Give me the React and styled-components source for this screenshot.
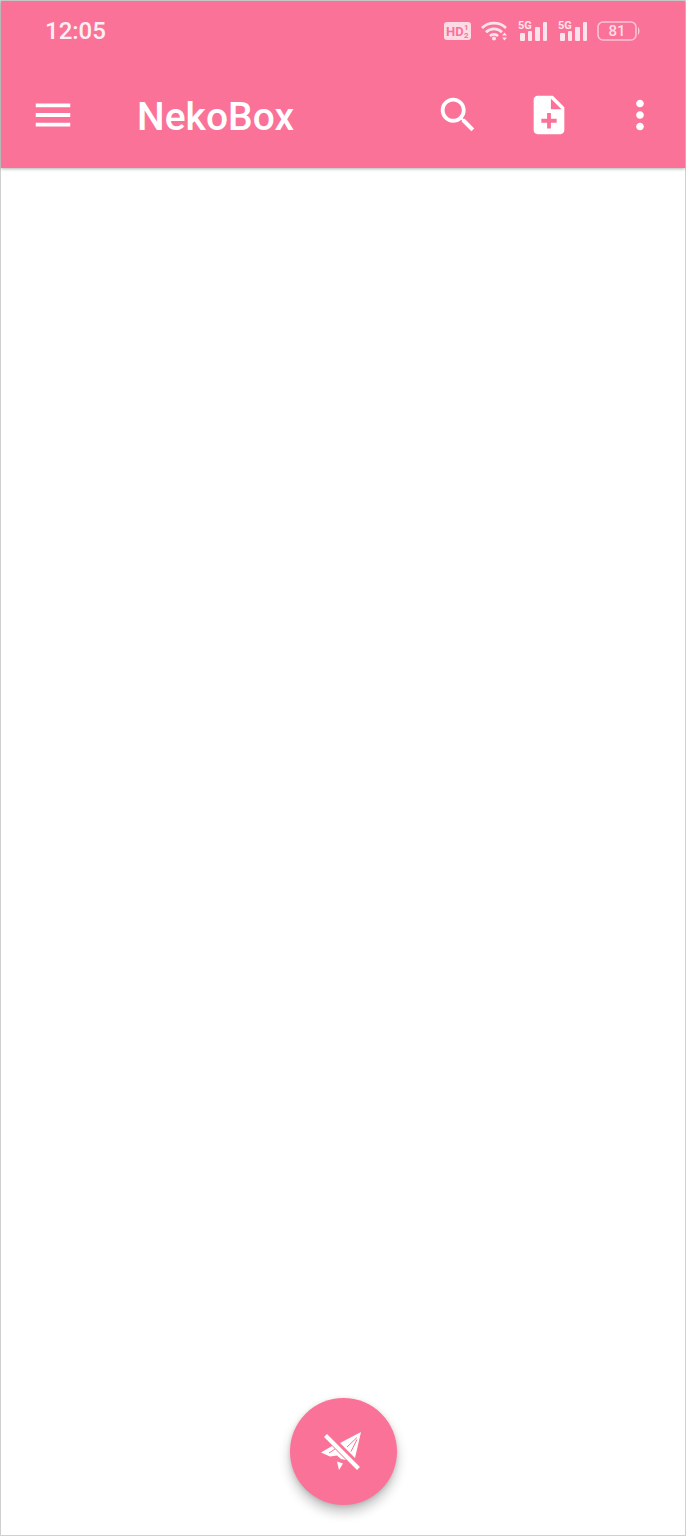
import styled, { createGlobalStyle } from "styled-components"

export default function App() {
    return (
        <Screen>
            <GlobalStyle />
            <Header>
                <StatusBar>
                    <Clock>12:05</Clock>
                    <StatusIcons>
                        <HdIcon />
                        <WifiIcon />
                        <SignalIcon />
                        <SignalIcon />
                        <BatteryIcon level={81} />
                    </StatusIcons>
                </StatusBar>
                <Toolbar>
                    <IconButton aria-label="Open menu">
                        <ToolbarIcon d="M3 18h18v-2H3v2zm0-5h18v-2H3v2zm0-7v2h18V6H3z" />
                    </IconButton>
                    <Title>NekoBox</Title>
                    <Actions>
                        <IconButton aria-label="Search">
                            <ToolbarIcon d="M15.5 14h-.79l-.28-.27C15.41 12.59 16 11.11 16 9.5 16 5.91 13.09 3 9.5 3S3 5.91 3 9.5 5.91 16 9.5 16c1.61 0 3.09-.59 4.23-1.57l.27.28v.79l5 4.99L20.49 19l-4.99-5zm-6 0C7.01 14 5 11.99 5 9.5S7.01 5 9.5 5 14 7.01 14 9.5 11.99 14 9.5 14z" />
                        </IconButton>
                        <IconButton aria-label="Add profile">
                            <ToolbarIcon d="M14 2H6c-1.1 0-1.99.9-1.99 2L4 20c0 1.1.89 2 1.99 2H18c1.1 0 2-.9 2-2V8l-6-6zm2 14h-3v3h-2v-3H8v-2h3v-3h2v3h3v2zm-3-7V3.5L18.5 9H13z" />
                        </IconButton>
                        <IconButton aria-label="More options">
                            <ToolbarIcon d="M12 8c1.1 0 2-.9 2-2s-.9-2-2-2-2 .9-2 2 .9 2 2 2zm0 2c-1.1 0-2 .9-2 2s.9 2 2 2 2-.9 2-2-.9-2-2-2zm0 6c-1.1 0-2 .9-2 2s.9 2 2 2 2-.9 2-2-.9-2-2-2z" />
                        </IconButton>
                    </Actions>
                </Toolbar>
            </Header>
            <Content />
            <Footer>
                <ConnectButton aria-label="Connect">
                    <PlaneOffIcon />
                </ConnectButton>
            </Footer>
        </Screen>
    )
}

function ToolbarIcon({ d }) {
    return (
        <svg width="46" height="46" viewBox="0 0 24 24" fill="currentColor">
            <path d={d} />
        </svg>
    )
}

function HdIcon() {
    return (
        <svg width="27" height="20" viewBox="0 0 27 20">
            <rect x="0" y="1" width="27" height="18" rx="3" fill="#fddbe5" />
            <StatusText x="2" y="15" $size={13} $color="#fb7299">HD</StatusText>
            <StatusText x="20" y="9" $size={8} $color="#fb7299">1</StatusText>
            <StatusText x="20" y="17" $size={8} $color="#fb7299">2</StatusText>
        </svg>
    )
}

function WifiIcon() {
    return (
        <svg width="28" height="20" viewBox="0 0 28 20" fill="none" stroke="#fde3eb" strokeWidth="2.6">
            <path d="M2 7C8.5.5 19.5.5 26 7" />
            <path d="M6 11.2c4.5-4.4 11.5-4.4 16 0" />
            <path d="M10 15c2.2-2.2 5.8-2.2 8 0" />
            <circle cx="14" cy="17.5" r="2" fill="#fde3eb" stroke="none" />
            <path d="M22 14.5l2.5-3 2.5 3zM22 16.5l2.5 3 2.5-3z" fill="#fde3eb" stroke="none" />
        </svg>
    )
}

function SignalIcon() {
    return (
        <svg width="31" height="28" viewBox="0 0 31 28" fill="#fde3eb">
            <StatusText x="1" y="12" $size={11} $color="#fde3eb">5G</StatusText>
            <rect x="3" y="16" width="5" height="8" rx="1" />
            <rect x="11" y="14" width="4" height="10" rx="1" />
            <rect x="18" y="10" width="5" height="14" rx="1" />
            <rect x="26" y="5" width="4" height="19" rx="1" />
        </svg>
    )
}

function BatteryIcon({ level }) {
    return (
        <svg width="44" height="20" viewBox="0 0 44 20">
            <rect x="1" y="1" width="38" height="18" rx="5" fill="none" stroke="#fdc3d4" strokeWidth="1.6" />
            <path d="M41 6c2 1.5 2 6.5 0 8z" fill="#fdc3d4" />
            <StatusText x="20" y="15" textAnchor="middle" $size={15} $weight={500} $color="#fddbe5">{level}</StatusText>
        </svg>
    )
}

function PlaneOffIcon() {
    return (
        <svg width="66" height="66" viewBox="0 0 66 66" fill="#fff">
            <path d="M51 13L30 24l15 15z" />
            <path d="M11 33.5L22 27l14 14-5-1-4-3.5-7 1z" />
            <path d="M27 42.5l6 2-4 6.5z" />
            <path d="M47 18.5L37 28M47 20.5l-6 12M19 34l6-4" stroke="#fb7299" strokeWidth="1" />
            <path d="M15.5 16.5L48.500 49.500" stroke="#fff" strokeWidth="4" />
        </svg>
    )
}

const GlobalStyle = createGlobalStyle`
    * {
        box-sizing: border-box;
    }
    body {
        margin: 0;
        background: #fff;
        font-family: Roboto, "Liberation Sans", sans-serif;
    }
`

const Screen = styled.div`
    display: flex;
    flex-direction: column;
    min-height: 100vh;
    border: 1px solid #d0d0d0;
    background: #fff;
`

const Header = styled.header`
    background: #fb7299;
    color: #fff;
    box-shadow: 0 1px 3px rgba(0, 0, 0, 0.3);
`

const StatusBar = styled.div`
    display: flex;
    align-items: center;
    justify-content: space-between;
    height: 60px;
    padding: 0 44px;
`

const Clock = styled.time`
    font-size: 24px;
    line-height: 28px;
    font-weight: 500;
    color: #fff0f4;
`

const StatusIcons = styled.div`
    display: flex;
    align-items: center;
    gap: 9px;
    svg {
        display: block;
    }
`

const StatusText = styled.text`
    font-size: ${({ $size }) => $size}px;
    font-weight: ${({ $weight }) => $weight || 700};
    fill: ${({ $color }) => $color};
`

const Toolbar = styled.div`
    display: flex;
    align-items: center;
    height: 107px;
    padding: 0 22px 0 29px;
`

const IconButton = styled.button`
    display: flex;
    padding: 0;
    border: none;
    background: none;
    color: inherit;
    cursor: pointer;
`

const Title = styled.h1`
    flex: 1;
    margin: 0;
    padding: 4px 0 0 61px;
    font-size: 39px;
    line-height: 46px;
    font-weight: 500;
`

const Actions = styled.div`
    display: flex;
    gap: 45px;
`

const Content = styled.main`
    flex: 1;
`

const Footer = styled.footer`
    display: flex;
    justify-content: center;
    padding-bottom: 30px;
`

const ConnectButton = styled.button`
    display: flex;
    align-items: center;
    justify-content: center;
    width: 107px;
    height: 107px;
    padding: 0;
    border: none;
    border-radius: 50%;
    background: #fb7299;
    box-shadow: 0 7px 12px rgba(0, 0, 0, 0.24), 0 1px 4px rgba(0, 0, 0, 0.12);
    cursor: pointer;
`
